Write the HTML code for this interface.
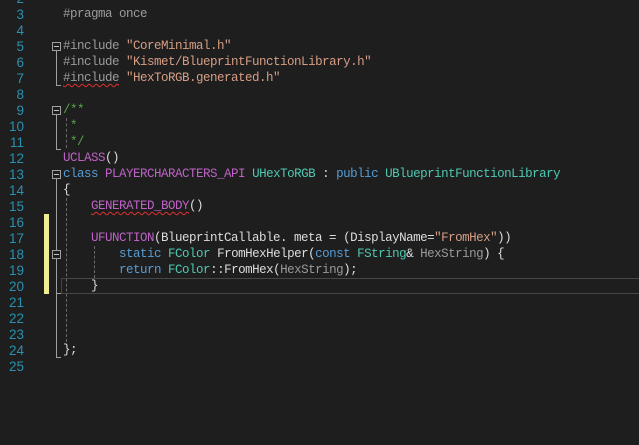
<!DOCTYPE html>
<html><head><style>
body{margin:0;width:639px;height:445px;background:#1e1e1e;overflow:hidden;position:relative;font-family:"Liberation Mono",monospace;font-size:12.5px;letter-spacing:-0.5px}
.l{position:absolute;left:0;height:16px;line-height:17px;white-space:pre;width:639px}
.n{position:absolute;right:615px;color:#2b91af;font-family:"Liberation Sans",sans-serif;font-size:13.5px;letter-spacing:0}
.t{position:absolute;left:63px;color:#dcdcdc}
.p{color:#9b9b9b}.s{color:#d69d85}.k{color:#569cd6}.m{color:#bd63c5}.ty{color:#4ec9b0}.c{color:#57a64a}.pa{color:#9a9a9a}
.sq{text-decoration:underline wavy #e03030;text-decoration-thickness:1px;text-underline-offset:2px}
.fb{position:absolute;left:52px;width:7px;height:7px;border:1px solid #a0a0a0;background:#1e1e1e}
.fb:after{content:"";position:absolute;left:1px;top:3px;width:5px;height:1px;background:#c0c0c0}
.v{position:absolute;width:1px;background:#a0a0a0}
.h{position:absolute;height:1px;background:#a0a0a0}
.g{position:absolute;width:0;border-left:1px dashed #6a6a6a}
</style></head><body>
<div class="l" style="top:-26px"><span class="n">1</span></div>
<div class="l" style="top:-10px"><span class="n">2</span></div>
<div class="l" style="top:6px"><span class="n">3</span><span class="t p">#pragma once</span></div>
<div class="l" style="top:22px"><span class="n">4</span></div>
<div class="l" style="top:38px"><span class="n">5</span><span class="t"><span class="p">#include</span> <span class="s">"CoreMinimal.h"</span></span></div>
<div class="l" style="top:54px"><span class="n">6</span><span class="t"><span class="p">#include</span> <span class="s">"Kismet/BlueprintFunctionLibrary.h"</span></span></div>
<div class="l" style="top:70px"><span class="n">7</span><span class="t"><span class="p sq">#include</span> <span class="s">"HexToRGB.generated.h"</span></span></div>
<div class="l" style="top:86px"><span class="n">8</span></div>
<div class="l" style="top:102px"><span class="n">9</span><span class="t c">/**</span></div>
<div class="l" style="top:118px"><span class="n">10</span><span class="t c"> *</span></div>
<div class="l" style="top:134px"><span class="n">11</span><span class="t c"> */</span></div>
<div class="l" style="top:150px"><span class="n">12</span><span class="t"><span class="m">UCLASS</span>()</span></div>
<div class="l" style="top:166px"><span class="n">13</span><span class="t"><span class="k">class</span> <span class="m">PLAYERCHARACTERS_API</span> <span class="ty">UHexToRGB</span> : <span class="k">public</span> <span class="ty">UBlueprintFunctionLibrary</span></span></div>
<div class="l" style="top:182px"><span class="n">14</span><span class="t">{</span></div>
<div class="l" style="top:198px"><span class="n">15</span><span class="t">    <span class="m sq">GENERATED_BODY</span>()</span></div>
<div class="l" style="top:214px"><span class="n">16</span></div>
<div class="l" style="top:230px"><span class="n">17</span><span class="t">    <span class="m">UFUNCTION</span>(BlueprintCallable. meta = (DisplayName=<span class="s">"FromHex"</span>))</span></div>
<div class="l" style="top:246px"><span class="n">18</span><span class="t">        <span class="k">static</span> <span class="ty">FColor</span> FromHexHelper(<span class="k">const</span> <span class="ty">FString</span>&amp; <span class="pa">HexString</span>) {</span></div>
<div class="l" style="top:262px"><span class="n">19</span><span class="t">        <span class="k">return</span> <span class="ty">FColor</span>::FromHex(<span class="pa">HexString</span>);</span></div>
<div style="position:absolute;left:61px;top:278px;width:590px;height:14px;border:1px solid #464646"></div>
<div class="l" style="top:278px"><span class="n">20</span><span class="t">    }</span></div>
<div class="l" style="top:294px"><span class="n">21</span></div>
<div class="l" style="top:310px"><span class="n">22</span></div>
<div class="l" style="top:326px"><span class="n">23</span></div>
<div class="l" style="top:342px"><span class="n">24</span><span class="t">};</span></div>
<div class="l" style="top:358px"><span class="n">25</span></div>
<div style="position:absolute;left:44px;top:214px;width:5px;height:80px;background:#efef91"></div>
<div class="v" style="left:56px;top:50px;height:36px"></div><div class="h" style="left:56px;top:85px;width:5px"></div>
<div class="fb" style="top:42px"></div>
<div class="v" style="left:56px;top:114px;height:36px"></div><div class="h" style="left:56px;top:149px;width:5px"></div>
<div class="fb" style="top:106px"></div>
<div class="v" style="left:56px;top:178px;height:180px"></div><div class="h" style="left:56px;top:357px;width:5px"></div>
<div class="fb" style="top:170px"></div>
<div class="h" style="left:56px;top:293px;width:5px"></div>
<div class="fb" style="top:250px"></div>
<div class="g" style="left:66px;top:118px;height:30px"></div>
<div class="g" style="left:66px;top:198px;height:144px"></div>
<div class="g" style="left:94px;top:246px;height:32px"></div>
</body></html>
